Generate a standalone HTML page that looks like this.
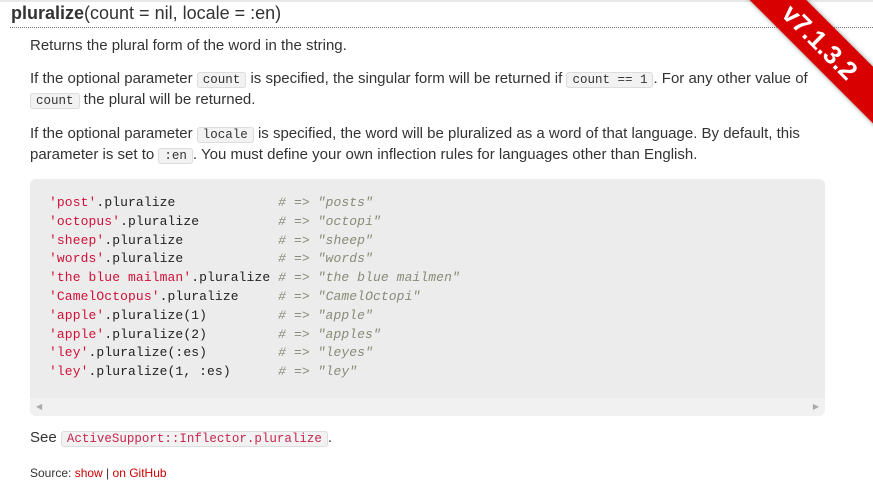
<!DOCTYPE html>
<html><head><style>
body{margin:0;width:873px;height:492px;overflow:hidden;background:#fff;font-family:"Liberation Sans",Arial,sans-serif;color:#333;position:relative}
.top{position:absolute;left:0;top:0;width:873px;height:2px;background:#e8e8e8}
h3{position:absolute;left:11px;top:2px;margin:0;font-size:18px;font-weight:normal;color:#333;line-height:22px}
h3 b{font-weight:bold}
.dot{position:absolute;left:10px;right:0;top:27px;border-top:1px dotted #777}
p{position:absolute;left:30px;margin:0;font-size:15px;line-height:20px;width:790px}
code{font-family:"Liberation Mono",monospace;font-size:12.5px;background:#f2f2f2;border:1px solid #ddd;border-radius:3px;padding:0 5px}
.pre{position:absolute;left:30px;top:179px;width:795px;height:237px;background:#ececec;border-radius:6px;overflow:hidden}
.pre pre{margin:0;position:absolute;left:19px;top:15px;font-family:"Liberation Mono",monospace;font-size:13px;line-height:18.8px;color:#222;letter-spacing:0.1px}
.s{color:#d0103a}.c{color:#8a8a78;font-style:italic}
.sb{position:absolute;left:0;bottom:0;width:795px;height:18px;background:#f1f1f1}
.rib{position:absolute;left:690px;top:22px;width:260px;height:40px;background:#d80000;transform-origin:50% 50%;transform:rotate(45deg);color:#fff;font-weight:bold;font-size:26px;text-align:center;line-height:40px;box-shadow:0 0 4px #888}
a{color:#c00;text-decoration:none}
</style></head><body>
<div class="top"></div>
<h3><b>pluralize</b>(count = nil, locale = :en)</h3>
<div class="dot"></div>
<p style="top:36px">Returns the plural form of the word in the string.</p>
<p style="top:69px">If the optional parameter <code>count</code> is specified, the singular form will be returned if <code>count == 1</code>. For any other value of <code>count</code> the plural will be returned.</p>
<p style="top:124px">If the optional parameter <code>locale</code> is specified, the word will be pluralized as a word of that language. By default, this parameter is set to <code>:en</code>. You must define your own inflection rules for languages other than English.</p>
<div class="pre"><pre><span class="s">'post'</span>.pluralize             <span class="c"># =&gt; "posts"</span>
<span class="s">'octopus'</span>.pluralize          <span class="c"># =&gt; "octopi"</span>
<span class="s">'sheep'</span>.pluralize            <span class="c"># =&gt; "sheep"</span>
<span class="s">'words'</span>.pluralize            <span class="c"># =&gt; "words"</span>
<span class="s">'the blue mailman'</span>.pluralize <span class="c"># =&gt; "the blue mailmen"</span>
<span class="s">'CamelOctopus'</span>.pluralize     <span class="c"># =&gt; "CamelOctopi"</span>
<span class="s">'apple'</span>.pluralize(1)         <span class="c"># =&gt; "apple"</span>
<span class="s">'apple'</span>.pluralize(2)         <span class="c"># =&gt; "apples"</span>
<span class="s">'ley'</span>.pluralize(:es)         <span class="c"># =&gt; "leyes"</span>
<span class="s">'ley'</span>.pluralize(1, :es)      <span class="c"># =&gt; "ley"</span></pre>
<div class="sb"><span style="position:absolute;left:6px;top:4px;font-size:8px;color:#aaa">◀</span><span style="position:absolute;right:6px;top:4px;font-size:8px;color:#aaa">▶</span></div></div>
<p style="top:428px">See <code style="color:#c7254e">ActiveSupport::Inflector.pluralize</code>.</p>
<p style="top:463px;font-size:12px">Source: <a>show</a> | <a>on GitHub</a></p>
<div class="rib">v7.1.3.2</div>
</body></html>
